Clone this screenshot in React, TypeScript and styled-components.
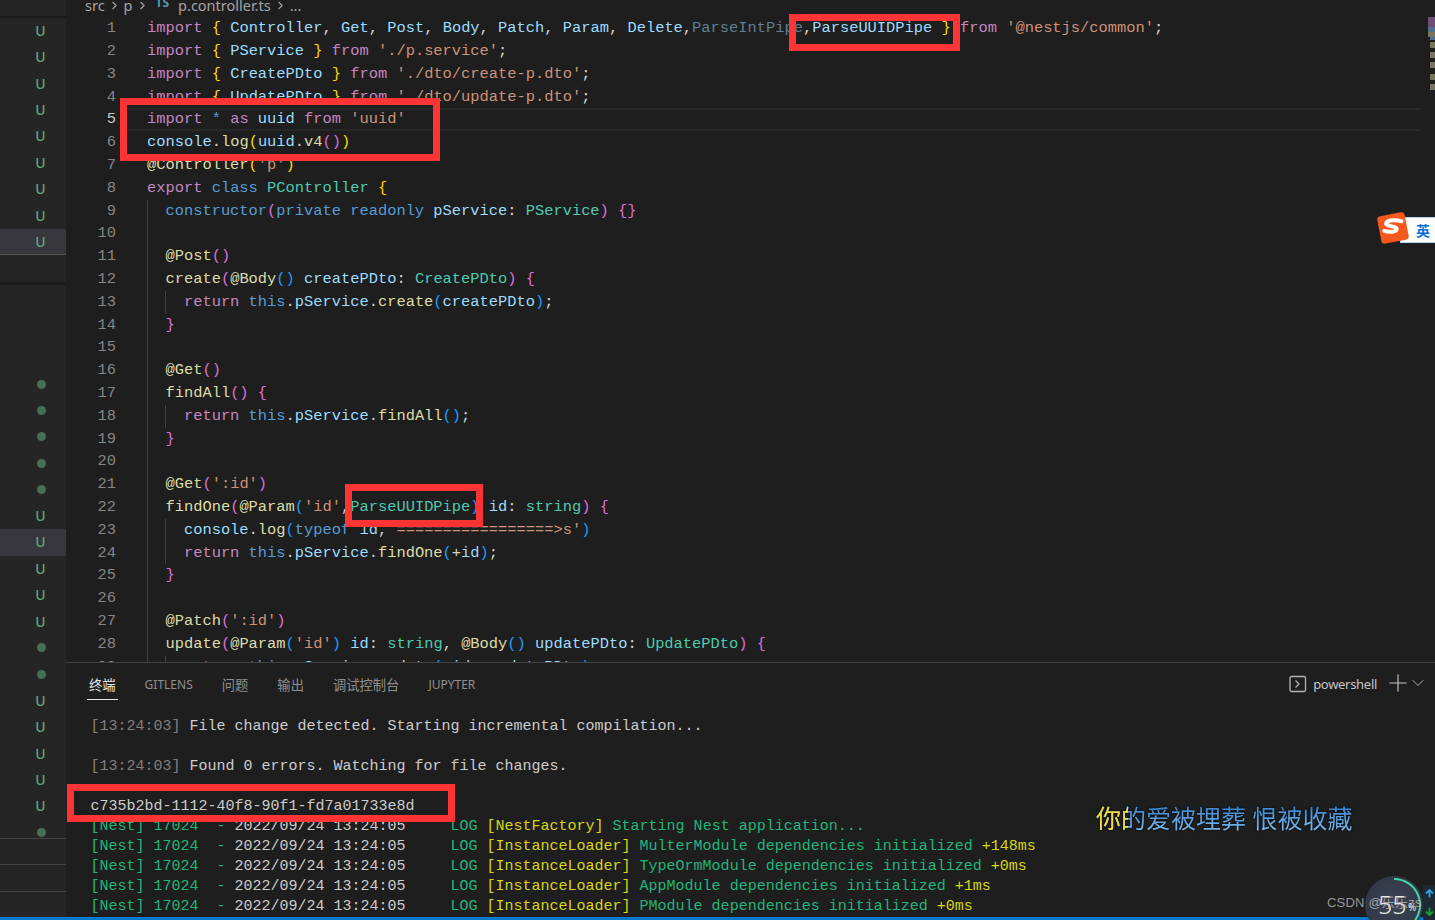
import styled, { createGlobalStyle } from 'styled-components';
import { ChevronDown, ChevronRight, Plus } from 'lucide-react';

type TokenKind = 'k' | 'i' | 's' | 't' | 'f' | 'b' | 'g' | 'o' | 'u' | 'p' | 'd';
type Token = [TokenKind, string];
type CodeLine = { indent: number; tokens: Token[] };

const tokenColors: Record<TokenKind, string> = {
	k: '#c586c0',
	i: '#9cdcfe',
	s: '#ce9178',
	t: '#4ec9b0',
	f: '#dcdcaa',
	b: '#569cd6',
	g: '#ffd700',
	o: '#da70d6',
	u: '#179fff',
	p: '#d4d4d4',
	d: '#5f7f93',
};

const termColors = {
	green: '#23b57c',
	yellow: '#d7d712',
	white: '#cccccc',
	gray: '#7f7f7f',
};

const code: CodeLine[] = [
	{ indent: 0, tokens: [['k', 'import'], ['p', ' '], ['g', '{'], ['i', ' Controller'], ['p', ', '], ['i', 'Get'], ['p', ', '], ['i', 'Post'], ['p', ', '], ['i', 'Body'], ['p', ', '], ['i', 'Patch'], ['p', ', '], ['i', 'Param'], ['p', ', '], ['i', 'Delete'], ['p', ','], ['d', 'ParseIntPipe'], ['p', ','], ['i', 'ParseUUIDPipe '], ['g', '}'], ['k', ' from '], ['s', "'@nestjs/common'"], ['p', ';']] },
	{ indent: 0, tokens: [['k', 'import'], ['p', ' '], ['g', '{'], ['i', ' PService '], ['g', '}'], ['k', ' from '], ['s', "'./p.service'"], ['p', ';']] },
	{ indent: 0, tokens: [['k', 'import'], ['p', ' '], ['g', '{'], ['i', ' CreatePDto '], ['g', '}'], ['k', ' from '], ['s', "'./dto/create-p.dto'"], ['p', ';']] },
	{ indent: 0, tokens: [['k', 'import'], ['p', ' '], ['g', '{'], ['i', ' UpdatePDto '], ['g', '}'], ['k', ' from '], ['s', "'./dto/update-p.dto'"], ['p', ';']] },
	{ indent: 0, tokens: [['k', 'import'], ['b', ' * '], ['k', 'as'], ['i', ' uuid '], ['k', 'from '], ['s', "'uuid'"]] },
	{ indent: 0, tokens: [['i', 'console'], ['p', '.'], ['f', 'log'], ['g', '('], ['i', 'uuid'], ['p', '.'], ['f', 'v4'], ['o', '()'], ['g', ')']] },
	{ indent: 0, tokens: [['f', '@Controller'], ['g', '('], ['s', "'p'"], ['g', ')']] },
	{ indent: 0, tokens: [['k', 'export'], ['b', ' class '], ['t', 'PController '], ['g', '{']] },
	{ indent: 1, tokens: [['b', 'constructor'], ['o', '('], ['b', 'private readonly '], ['i', 'pService'], ['p', ': '], ['t', 'PService'], ['o', ')'], ['p', ' '], ['o', '{}']] },
	{ indent: 1, tokens: [] },
	{ indent: 1, tokens: [['f', '@Post'], ['o', '()']] },
	{ indent: 1, tokens: [['f', 'create'], ['o', '('], ['f', '@Body'], ['u', '()'], ['i', ' createPDto'], ['p', ': '], ['t', 'CreatePDto'], ['o', ')'], ['p', ' '], ['o', '{']] },
	{ indent: 2, tokens: [['k', 'return '], ['b', 'this'], ['p', '.'], ['i', 'pService'], ['p', '.'], ['f', 'create'], ['u', '('], ['i', 'createPDto'], ['u', ')'], ['p', ';']] },
	{ indent: 1, tokens: [['o', '}']] },
	{ indent: 1, tokens: [] },
	{ indent: 1, tokens: [['f', '@Get'], ['o', '()']] },
	{ indent: 1, tokens: [['f', 'findAll'], ['o', '()'], ['p', ' '], ['o', '{']] },
	{ indent: 2, tokens: [['k', 'return '], ['b', 'this'], ['p', '.'], ['i', 'pService'], ['p', '.'], ['f', 'findAll'], ['u', '()'], ['p', ';']] },
	{ indent: 1, tokens: [['o', '}']] },
	{ indent: 1, tokens: [] },
	{ indent: 1, tokens: [['f', '@Get'], ['o', '('], ['s', "':id'"], ['o', ')']] },
	{ indent: 1, tokens: [['f', 'findOne'], ['o', '('], ['f', '@Param'], ['u', '('], ['s', "'id'"], ['p', ','], ['t', 'ParseUUIDPipe'], ['u', ')'], ['i', ' id'], ['p', ': '], ['t', 'string'], ['o', ')'], ['p', ' '], ['o', '{']] },
	{ indent: 2, tokens: [['i', 'console'], ['p', '.'], ['f', 'log'], ['u', '('], ['b', 'typeof'], ['i', ' id'], ['p', ', '], ['s', "=================>s'"], ['u', ')']] },
	{ indent: 2, tokens: [['k', 'return '], ['b', 'this'], ['p', '.'], ['i', 'pService'], ['p', '.'], ['f', 'findOne'], ['u', '('], ['p', '+'], ['i', 'id'], ['u', ')'], ['p', ';']] },
	{ indent: 1, tokens: [['o', '}']] },
	{ indent: 1, tokens: [] },
	{ indent: 1, tokens: [['f', '@Patch'], ['o', '('], ['s', "':id'"], ['o', ')']] },
	{ indent: 1, tokens: [['f', 'update'], ['o', '('], ['f', '@Param'], ['u', '('], ['s', "'id'"], ['u', ')'], ['i', ' id'], ['p', ': '], ['t', 'string'], ['p', ', '], ['f', '@Body'], ['u', '()'], ['i', ' updatePDto'], ['p', ': '], ['t', 'UpdatePDto'], ['o', ')'], ['p', ' '], ['o', '{']] },
	{ indent: 2, tokens: [['k', 'return '], ['b', 'this'], ['p', '.'], ['i', 'pService'], ['p', '.'], ['f', 'update'], ['u', '('], ['p', '+'], ['i', 'id'], ['p', ', '], ['i', 'updatePDto'], ['u', ')'], ['p', ';']] },
];

type RowKind = 'u' | 'dot' | 'none';
type Row = { kind: RowKind; selected?: boolean; lined?: boolean };

const repeat = (kind: RowKind, count: number): Row[] => Array.from({ length: count }, () => ({ kind }));

const upperRows: Row[] = [...repeat('u', 8), { kind: 'u', selected: true, lined: true }, { kind: 'none' }];
const lowerRows: Row[] = [
	...repeat('dot', 5),
	{ kind: 'u' },
	{ kind: 'u', selected: true },
	...repeat('u', 3),
	...repeat('dot', 2),
	...repeat('u', 5),
	{ kind: 'dot' },
];

const nestLogs = [
	{ scope: '[NestFactory]', msg: ' Starting Nest application...', time: '' },
	{ scope: '[InstanceLoader]', msg: ' MulterModule dependencies initialized ', time: '+148ms' },
	{ scope: '[InstanceLoader]', msg: ' TypeOrmModule dependencies initialized ', time: '+0ms' },
	{ scope: '[InstanceLoader]', msg: ' AppModule dependencies initialized ', time: '+1ms' },
	{ scope: '[InstanceLoader]', msg: ' PModule dependencies initialized ', time: '+0ms' },
];

const tabs = [
	{ label: '终端', latin: false },
	{ label: 'GITLENS', latin: true },
	{ label: '问题', latin: false },
	{ label: '输出', latin: false },
	{ label: '调试控制台', latin: false },
	{ label: 'JUPYTER', latin: true },
];

const minimapRows = [
	[0, 0, 7, 10, '#6e4f74'],
	[0, 10, 7, 5, '#4f6d8c'],
	[0, 15, 7, 5, '#77755f'],
	[2, 20, 5, 3, '#4f6d8c'],
	[2, 25, 5, 6, '#77755f'],
	[2, 35, 5, 6, '#77755f'],
	[2, 45, 5, 6, '#77755f'],
	[2, 57, 5, 6, '#77755f'],
	[2, 67, 5, 6, '#77755f'],
] as const;

const GlobalStyle = createGlobalStyle`
	html, body {
		margin: 0;
		padding: 0;
		background: #1e1e1e;
	}
`;

const Page = styled.div`
	position: relative;
	width: 1435px;
	height: 920px;
	overflow: hidden;
	display: flex;
	flex-direction: column;
	background: #1e1e1e;
`;

const Workbench = styled.div`
	flex: 1;
	min-height: 0;
	display: flex;
`;

const StatusBar = styled.div`
	height: 3px;
	background: #007acc;
`;

const Sidebar = styled.aside`
	width: 66px;
	flex-shrink: 0;
	display: flex;
	flex-direction: column;
	background: #252526;
`;

const SideHeader = styled.div`
	height: 17.6px;
	flex-shrink: 0;
	box-sizing: border-box;
	border-bottom: 2px solid #1b1b1c;
`;

const TreeGap = styled.div`
	height: 89.4px;
	flex-shrink: 0;
	box-sizing: border-box;
	border-top: 3px solid #1b1b1c;
`;

const TreeList = styled.div`
	flex: 1;
	min-height: 0;
	overflow: hidden;
`;

const TreeRow = styled.div<{ $selected?: boolean; $lined?: boolean }>`
	height: 26.4px;
	flex-shrink: 0;
	box-sizing: border-box;
	display: flex;
	align-items: center;
	justify-content: flex-end;
	padding-right: 20.5px;
	background: ${({ $selected }) => ($selected ? '#37373d' : 'transparent')};
	box-shadow: ${({ $lined }) => ($lined ? 'inset 0 -1px 0 #555558' : 'none')};
`;

const UBadge = styled.span`
	font-family: 'Noto Sans', sans-serif;
	font-size: 14px;
	font-weight: 500;
	line-height: 16px;
	color: #5fa67c;
`;

const DotBadge = styled.span`
	width: 9px;
	height: 9px;
	border-radius: 50%;
	background: #466f58;
`;

const SideSection = styled.div`
	height: 26.4px;
	flex-shrink: 0;
	box-sizing: border-box;
	border-top: 1px solid #414141;
`;

const Main = styled.main`
	flex: 1;
	min-width: 0;
	display: flex;
	flex-direction: column;
`;

const EditorPane = styled.section`
	position: relative;
	height: 662px;
	flex-shrink: 0;
	overflow: hidden;
`;

const Breadcrumb = styled.nav`
	height: 17.2px;
	padding-left: 19px;
	display: flex;
	align-items: flex-start;
	gap: 3px;
	font-family: 'Noto Sans', sans-serif;
	font-size: 14.5px;
	line-height: 10px;
	color: #a3a3a3;
	overflow: hidden;
`;

const CrumbChevron = styled(ChevronRight)`
	width: 13px;
	height: 13px;
	margin-top: -1px;
	color: #a3a3a3;
`;

const TsMark = styled.span`
	margin: 0 6px 0 4px;
	font-size: 12px;
	line-height: 6px;
	font-weight: 700;
	color: #519aba;
`;

const CodeBody = styled.div`
	font-family: 'Liberation Mono', monospace;
	font-size: 15.4px;
	line-height: 22.8px;
	white-space: pre;
`;

const EditorLine = styled.div`
	height: 22.8px;
	display: flex;
`;

const LineNumber = styled.span<{ $active?: boolean }>`
	width: 50px;
	flex-shrink: 0;
	text-align: right;
	color: ${({ $active }) => ($active ? '#c6c6c6' : '#858585')};
`;

const LineContent = styled.div<{ $active?: boolean }>`
	flex: 1;
	margin: 0 15px 0 8px;
	padding-left: 23px;
	display: flex;
	box-shadow: ${({ $active }) => ($active ? 'inset 0 2px 0 #282828, inset 0 -2px 0 #282828' : 'none')};
`;

const IndentGuide = styled.span`
	width: 18.48px;
	flex-shrink: 0;
	box-sizing: border-box;
	border-left: 1px solid #404040;
`;

const Tok = styled.span<{ $kind: TokenKind }>`
	color: ${({ $kind }) => tokenColors[$kind]};
`;

const Minimap = styled.svg`
	position: absolute;
	top: 17px;
	right: 0;
	width: 7px;
	height: 73px;
`;

const Panel = styled.section`
	flex: 1;
	min-height: 0;
	box-sizing: border-box;
	border-top: 1px solid #414141;
	display: flex;
	flex-direction: column;
`;

const PanelBar = styled.div`
	height: 54px;
	flex-shrink: 0;
	box-sizing: border-box;
	padding: 12.5px 7px 0 21px;
	display: flex;
	align-items: flex-start;
	gap: 25px;
	font-family: 'Noto Sans', 'Noto Sans CJK SC', sans-serif;
	line-height: 18px;
`;

const PanelTab = styled.span<{ $active?: boolean; $latin?: boolean }>`
	padding: 0 2px 5px;
	font-size: ${({ $latin }) => ($latin ? '12px' : '13.3px')};
	color: ${({ $active }) => ($active ? '#e7e7e7' : '#8f8f8f')};
	border-bottom: 1px solid ${({ $active }) => ($active ? '#e7e7e7' : 'transparent')};
`;

const PanelActions = styled.div`
	margin-left: auto;
	margin-top: -5px;
	display: flex;
	align-items: center;
	color: #c5c5c5;
`;

const ShellName = styled.span`
	margin: 0 7px 0 6px;
	font-size: 13px;
	letter-spacing: -0.3px;
`;

const PlusIcon = styled(Plus)`
	margin-top: -2px;
`;

const CaretIcon = styled(ChevronDown)`
	margin-left: -4px;
	margin-top: -2px;
`;

const Terminal = styled.div`
	padding-left: 24.5px;
	font-family: 'Liberation Mono', monospace;
	font-size: 15px;
	line-height: 20px;
	white-space: pre;
	color: ${termColors.white};
`;

const TermLine = styled.div`
	height: 20px;
`;

const TermText = styled.span<{ $color: keyof typeof termColors }>`
	color: ${({ $color }) => termColors[$color]};
`;

const RedBox = styled.div<{ $left: number; $top: number; $width: number; $height: number }>`
	position: absolute;
	left: ${({ $left }) => $left}px;
	top: ${({ $top }) => $top}px;
	width: ${({ $width }) => $width}px;
	height: ${({ $height }) => $height}px;
	box-sizing: border-box;
	border: 7px solid #ff3434;
`;

const ImeWidget = styled.div`
	position: absolute;
	left: 1377px;
	top: 212px;
	width: 58px;
	height: 33px;
`;

const ImeTab = styled.div`
	position: absolute;
	left: 23px;
	top: 5px;
	right: 0;
	bottom: 2px;
	box-sizing: border-box;
	padding-left: 15px;
	display: flex;
	align-items: center;
	background: #ffffff;
	border: 1px solid #b9d4ee;
	border-right: 0;
	font-family: 'Noto Sans CJK SC', sans-serif;
	font-size: 14px;
	font-weight: 700;
	color: #0a6fdc;
`;

const ImeLogo = styled.svg`
	position: absolute;
	left: 0;
	top: 0;
	width: 33px;
	height: 33px;
`;

const Lyric = styled.div`
	position: absolute;
	left: 1096px;
	top: 799px;
	font-family: 'Noto Sans CJK SC', sans-serif;
	font-size: 25px;
	line-height: 36px;
	white-space: pre;
	word-spacing: 1px;
	color: transparent;
	background-image: linear-gradient(to right, #f0dc3c 32px, transparent 32px), linear-gradient(to bottom, #2472c4, #86c4f4);
	-webkit-background-clip: text;
	background-clip: text;
	filter: drop-shadow(0 0 1px #000000);
`;

const SpeedDock = styled.div`
	position: absolute;
	left: 1423px;
	top: 885px;
	width: 12px;
	height: 35px;
	display: flex;
	flex-direction: column;
	align-items: center;
	justify-content: space-around;
	background: #1d2935;
`;

const SpeedCircle = styled.div`
	position: absolute;
	left: 1365px;
	top: 876px;
	width: 58px;
	height: 58px;
	border-radius: 50%;
	background: radial-gradient(circle at 50% 45%, #3d4454, #2c3240);
`;

const SpeedArc = styled.svg`
	position: absolute;
	inset: 0;
`;

const SpeedValue = styled.span`
	position: absolute;
	left: 13px;
	top: 13px;
	font-family: 'Noto Sans', sans-serif;
	font-size: 25px;
	font-weight: 300;
	line-height: 30px;
	color: #e8e8e8;
`;

const SpeedUnit = styled.span`
	position: absolute;
	left: 43px;
	top: 24px;
	font-family: 'Noto Sans', sans-serif;
	font-size: 10px;
	color: #e8e8e8;
`;

const Watermark = styled.div`
	position: absolute;
	left: 1327px;
	top: 894px;
	font-family: 'Liberation Sans', 'Noto Sans CJK SC', sans-serif;
	font-size: 13px;
	line-height: 18px;
	letter-spacing: 0.2px;
	white-space: pre;
	color: rgba(200, 200, 200, 0.72);
`;

function TreeRows({ rows }: { rows: Row[] }) {
	return (
		<>
			{rows.map((row, i) => (
				<TreeRow key={i} $selected={row.selected} $lined={row.lined}>
					{row.kind === 'u' && <UBadge>U</UBadge>}
					{row.kind === 'dot' && <DotBadge />}
				</TreeRow>
			))}
		</>
	);
}

function TerminalIcon() {
	return (
		<svg width="18" height="18" viewBox="0 0 18 18" fill="none" stroke="#b5b5b5" strokeWidth="1.3">
			<rect x="1" y="1.5" width="15.5" height="15" rx="1.5" />
			<path d="M6.5 5.5 10 9l-3.5 3.5" />
		</svg>
	);
}

function App() {
	return (
		<Page>
			<GlobalStyle />
			<Workbench>
				<Sidebar>
					<SideHeader />
					<TreeRows rows={upperRows} />
					<TreeGap />
					<TreeList>
						<TreeRows rows={lowerRows} />
					</TreeList>
					<SideSection />
					<SideSection />
					<SideSection />
				</Sidebar>
				<Main>
					<EditorPane>
						<Breadcrumb>
							<span>src</span>
							<CrumbChevron />
							<span>p</span>
							<CrumbChevron />
							<TsMark>TS</TsMark>
							<span>p.controller.ts</span>
							<CrumbChevron />
							<span>...</span>
						</Breadcrumb>
						<CodeBody>
							{code.map((line, i) => (
								<EditorLine key={i}>
									<LineNumber $active={i === 4}>{i + 1}</LineNumber>
									<LineContent $active={i === 4}>
										{Array.from({ length: line.indent }, (_, n) => (
											<IndentGuide key={n} />
										))}
										<span>
											{line.tokens.map(([kind, text], n) => (
												<Tok key={n} $kind={kind}>
													{text}
												</Tok>
											))}
										</span>
									</LineContent>
								</EditorLine>
							))}
						</CodeBody>
						<Minimap viewBox="0 0 7 73">
							{minimapRows.map(([x, y, w, h, fill], i) => (
								<rect key={i} x={x} y={y} width={w} height={h} fill={fill} />
							))}
						</Minimap>
					</EditorPane>
					<Panel>
						<PanelBar>
							{tabs.map((tab, i) => (
								<PanelTab key={tab.label} $active={i === 0} $latin={tab.latin}>
									{tab.label}
								</PanelTab>
							))}
							<PanelActions>
								<TerminalIcon />
								<ShellName>powershell</ShellName>
								<PlusIcon size={28} strokeWidth={1} />
								<CaretIcon size={20} strokeWidth={1} />
							</PanelActions>
						</PanelBar>
						<Terminal>
							<TermLine>
								<TermText $color="gray">[13:24:03]</TermText> File change detected. Starting incremental compilation...
							</TermLine>
							<TermLine />
							<TermLine>
								<TermText $color="gray">[13:24:03]</TermText> Found 0 errors. Watching for file changes.
							</TermLine>
							<TermLine />
							<TermLine>c735b2bd-1112-40f8-90f1-fd7a01733e8d</TermLine>
							{nestLogs.map((log, i) => (
								<TermLine key={i}>
									<TermText $color="green">[Nest] 17024  - </TermText>
									2022/09/24 13:24:05
									<TermText $color="green">{'     LOG '}</TermText>
									<TermText $color="yellow">{log.scope}</TermText>
									<TermText $color="green">{log.msg}</TermText>
									<TermText $color="yellow">{log.time}</TermText>
								</TermLine>
							))}
						</Terminal>
					</Panel>
				</Main>
			</Workbench>
			<StatusBar />

			<RedBox $left={789} $top={14} $width={171} $height={37} />
			<RedBox $left={120} $top={98} $width={320} $height={63} />
			<RedBox $left={345} $top={484} $width={138} $height={43} />
			<RedBox $left={67} $top={784} $width={388} $height={38} />

			<ImeWidget>
				<ImeTab>英</ImeTab>
				<ImeLogo viewBox="0 0 32 32">
					<rect x="2" y="2" width="27" height="27" rx="3.5" fill="#f4581c" transform="rotate(-11 15.5 15.5)" />
					<path d="M24 9c-4.500-1.300-13-1.700-15 1.400-2.400 3.600 11 2.800 10 6.500-.7 2.700-7.500 2.700-12 1.500" fill="none" stroke="#ffffff" strokeWidth="3.8" strokeLinecap="round" />
				</ImeLogo>
			</ImeWidget>

			<Lyric>你的爱被埋葬 恨被收藏</Lyric>

			<SpeedDock>
				<svg width="9" height="9" viewBox="0 0 9 9" fill="none" stroke="#2aa0e8" strokeWidth="1.8">
					<path d="M4.5 8.500V1.500M1 4.500l3.500-3.500L8 4.500" />
				</svg>
				<svg width="9" height="9" viewBox="0 0 9 9" fill="none" stroke="#16a52c" strokeWidth="1.8">
					<path d="M4.500.5v7M1 4.500 4.500 8 8 4.500" />
				</svg>
			</SpeedDock>
			<SpeedCircle>
				<SpeedArc viewBox="0 0 58 58" width="58" height="58">
					<path d="M29 3a26 26 0 0 1 18 44.800" fill="none" stroke="#3fd2a8" strokeWidth="2" />
				</SpeedArc>
				<SpeedValue>55</SpeedValue>
				<SpeedUnit>%</SpeedUnit>
			</SpeedCircle>
			<Watermark>CSDN @乐乐zs</Watermark>
		</Page>
	);
}

export default App;
